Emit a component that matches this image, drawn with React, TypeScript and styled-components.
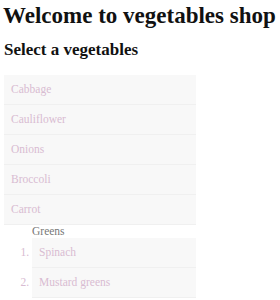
import React from 'react';
import styled, { createGlobalStyle } from 'styled-components';

const GlobalStyle = createGlobalStyle`
  body {
    margin: 0;
    padding: 4px 4px;
    font-family: "Liberation Serif", "Times New Roman", serif;
    background: #fff;
  }
`;

const Title = styled.h1`
  font-size: 23px;
  margin: 0 0 0 -1px;
  color: #111;
  line-height: 24px;
  white-space: nowrap;
`;
const Subtitle = styled.h2`
  font-size: 17px;
  margin: 12px 0 0 0;
  color: #111;
  line-height: 20px;
`;
const List = styled.ul`
  list-style: none;
  margin: 15px 0 0 0;
  padding: 0;
  width: 192px;
`;
const Item = styled.li`
  background: #f8f8f8;
  color: #d8bcd2;
  font-size: 11.5px;
  height: 29px;
  line-height: 29px;
  padding: 0 7px;
  border-bottom: 1px solid #f0f0f0;
`;
const Group = styled.li`
  list-style: none;
  padding-left: 28px;
  font-size: 11.5px;
  color: #777;
  line-height: 13px;
`;
const Ordered = styled.ol`
  margin: 0;
  padding: 0;
  color: #c4c4c4;
`;
const OrderedItem = styled(Item)`
  list-style: decimal;
`;

const vegetables = ['Cabbage', 'Cauliflower', 'Onions', 'Broccoli', 'Carrot'];
const greens = ['Spinach', 'Mustard greens'];

export default function App() {
  return (
    <>
      <GlobalStyle />
      <Title>Welcome to vegetables shop</Title>
      <Subtitle>Select a vegetables</Subtitle>
      <List>
        {vegetables.map((v) => (
          <Item key={v}>{v}</Item>
        ))}
        <Group>
          Greens
          <Ordered>
            {greens.map((g) => (
              <OrderedItem key={g}>{g}</OrderedItem>
            ))}
          </Ordered>
        </Group>
      </List>
    </>
  );
}
